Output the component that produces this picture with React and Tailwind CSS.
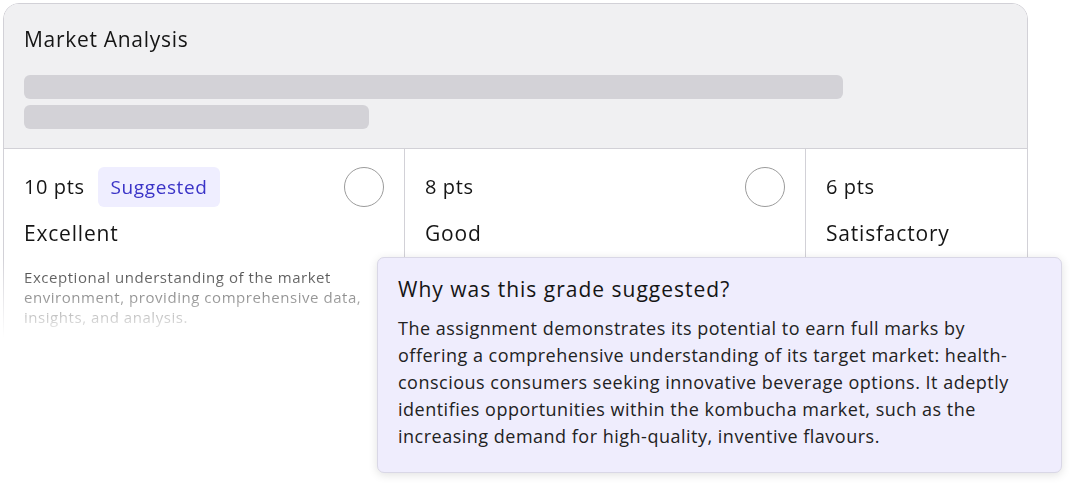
import React from 'react';

const levels = [
  { pts: '10 pts', label: 'Excellent', suggested: true, w: 'w-[401px]' },
  { pts: '8 pts', label: 'Good', w: 'w-[401px]' },
  { pts: '6 pts', label: 'Satisfactory', w: 'flex-1', noRadio: true },
];

const Radio = () => (
  <div className="w-10 h-10 rounded-full border-[1.5px] border-[#9b9b9b] bg-white shrink-0" />
);

export default function App() {
  return (
    <div className="relative w-[1080px] h-[492px] bg-white overflow-hidden font-['Open_Sans',sans-serif] text-[#151515]">
      <div className="pt-[3px] pl-[3px]">
        <div className="w-[1025px] h-[400px] rounded-t-[16px] border border-b-0 border-[#d2d1d7] overflow-hidden [mask-image:linear-gradient(to_bottom,black_255px,transparent_335px)]">
          {/* header */}
          <div className="bg-[#f0f0f2] border-b border-[#d2d1d7] h-[145px] px-5 pt-[21px]">
            <h2 className="text-[21px] leading-7 tracking-[0.7px]">Market Analysis</h2>
            <div className="mt-[22px] h-6 w-[819px] rounded-[6px] bg-[#d3d2d7]" />
            <div className="mt-[6px] h-6 w-[345px] rounded-[6px] bg-[#d3d2d7]" />
          </div>

          {/* levels */}
          <div className="flex h-full">
            {levels.map((l, i) => (
              <div
                key={l.label}
                className={`${l.w} ${i < 2 ? 'border-r border-[#d2d1d7]' : ''} px-5 pt-[18px]`}
              >
                <div className="flex items-center justify-between h-10">
                  <div className="flex items-center gap-[13px]">
                    <span className="text-[20px] tracking-[0.6px]">{l.pts}</span>
                    {l.suggested && (
                      <span className="h-10 px-[13px] flex items-center rounded-[6px] bg-[#efeeff] text-[#3a33c7] text-[19px] tracking-[0.6px]">
                        Suggested
                      </span>
                    )}
                  </div>
                  {!l.noRadio && <Radio />}
                </div>
                <div className="mt-3 text-[21px] leading-7 tracking-[0.8px]">{l.label}</div>
                {i === 0 && (
                  <p className="mt-5 text-[15px] leading-5 tracking-[0.55px] text-[#2e2e2e] pr-4">
                    Exceptional understanding of the market environment, providing comprehensive data, insights, and analysis.
                  </p>
                )}
              </div>
            ))}
          </div>
        </div>
      </div>

      {/* tooltip */}
      <div className="absolute left-[377px] top-[257px] w-[685px] h-[216px] rounded-[7px] border border-[#d9d7e6] bg-[#efedfd] shadow-[0_2px_10px_rgba(0,0,0,0.12)] pl-5 pr-7 pt-[17px]">
        <h3 className="text-[21px] leading-7 tracking-[1px] text-[#151515]">Why was this grade suggested?</h3>
        <p className="mt-3 text-[18px] leading-[27px] tracking-[0.5px] text-[#222]">
          The assignment demonstrates its potential to earn full marks by offering a comprehensive understanding of its target market: health-conscious consumers seeking innovative beverage options. It adeptly identifies opportunities within the kombucha market, such as the increasing demand for high-quality, inventive flavours.
        </p>
      </div>
    </div>
  );
}
